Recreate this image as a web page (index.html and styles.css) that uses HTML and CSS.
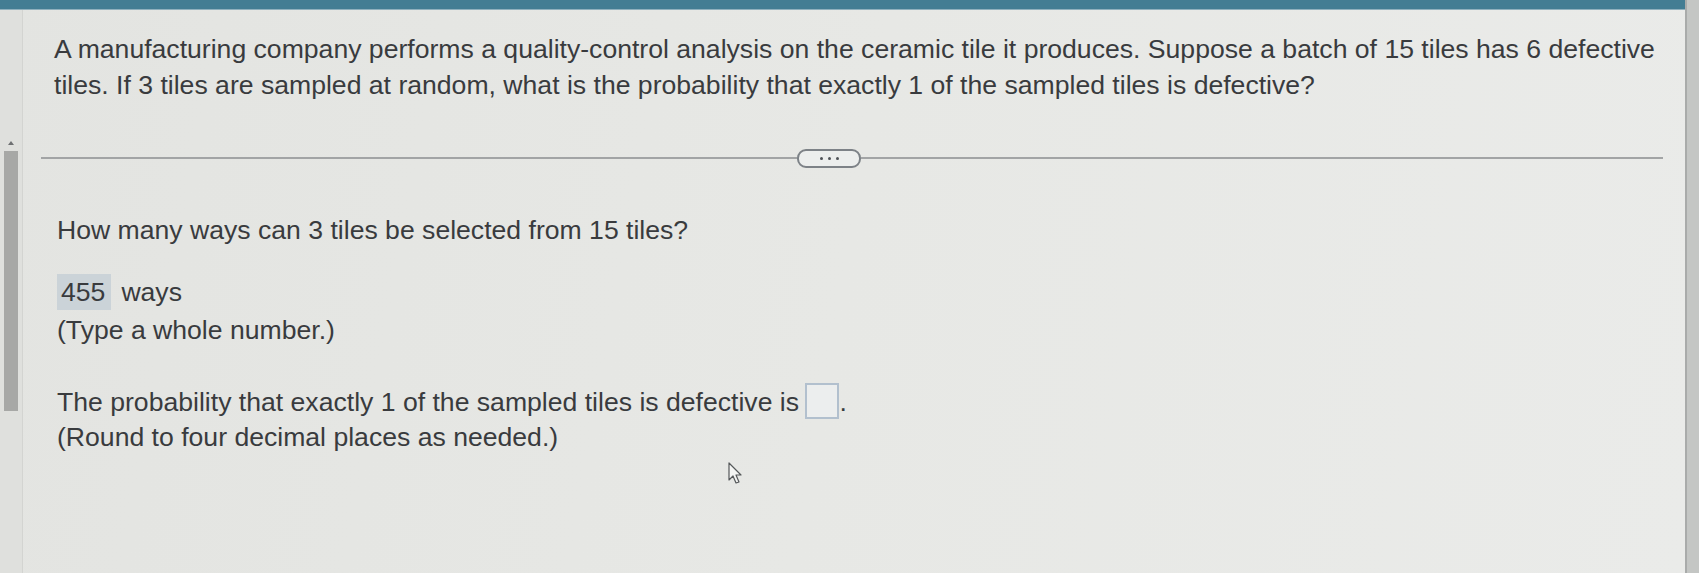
FILE: index.html
```html
<!DOCTYPE html>
<html lang="en">
<head>
<meta charset="utf-8">
<title>Question</title>
<link rel="stylesheet" href="styles.css">
</head>
<body>
<div class="app">
  <div class="page">
    <div class="topbar"></div>
    <div class="frame">
      <aside class="sidebar">
        <div class="scroll-arrow"></div>
        <div class="scroll-thumb"></div>
      </aside>
      <main class="main">
        <p class="question">A manufacturing company performs a quality-control analysis on the ceramic tile it produces. Suppose a batch of 15 tiles has 6 defective tiles. If 3 tiles are sampled at random, what is the probability that exactly 1 of the sampled tiles is defective?</p>
        <div class="divider">
          <div class="rule rule-left"></div>
          <div class="pill"><span></span><span></span><span></span></div>
          <div class="rule rule-right"></div>
        </div>
        <div class="work">
          <p class="line">How many ways can 3 tiles be selected from 15 tiles?</p>
          <div class="answer-row"><span class="filled">455</span><span>ways</span></div>
          <p class="line">(Type a whole number.)</p>
          <p class="line line-gap">The probability that exactly 1 of the sampled tiles is defective is <span class="blank"></span>.</p>
          <p class="line">(Round to four decimal places as needed.)</p>
        </div>
        <svg class="cursor" width="16" height="24" viewBox="0 0 16 24">
          <path d="M1 1 L1 18 L5 14 L8 21 L11 20 L8 13 L13 13 Z" fill="#f4f5f3" stroke="#55585a" stroke-width="1.2" stroke-linejoin="round"/>
        </svg>
      </main>
    </div>
  </div>
  <div class="edge"></div>
</div>
</body>
</html>
```

FILE: styles.css
```css
html, body {
  margin: 0;
  padding: 0;
  background: #e6e7e4;
}
.app {
  width: 1699px;
  height: 573px;
  display: flex;
  font-family: "Liberation Sans", Arial, sans-serif;
  color: #393b3e;
  overflow: hidden;
}
.page {
  flex: 1;
  display: flex;
  flex-direction: column;
  background: linear-gradient(100deg, #e3e4e1 0%, #e7e8e5 50%, #eaebe9 100%);
}
.topbar {
  height: 9px;
  background: #437d93;
  border-bottom: 1px solid #8fb0bd;
}
.frame {
  flex: 1;
  display: flex;
}
.sidebar {
  width: 23px;
  background: #dfe0dd;
  border-right: 1px solid #d3d4d1;
  display: flex;
  flex-direction: column;
  align-items: center;
  padding-top: 131px;
  box-sizing: border-box;
}
.scroll-arrow {
  width: 0;
  height: 0;
  border-left: 3px solid transparent;
  border-right: 3px solid transparent;
  border-bottom: 4px solid #6e7072;
}
.scroll-thumb {
  width: 14px;
  height: 260px;
  margin-top: 6px;
  background: #a7a8a6;
}
.main {
  flex: 1;
  position: relative;
  padding-top: 21px;
}
.question {
  margin: 0 0 0 31px;
  width: 1610px;
  font-size: 26.6px;
  line-height: 36px;
}
.divider {
  margin: 46px 0 0 18px;
  width: 1622px;
  height: 18px;
  display: flex;
  align-items: center;
}
.rule {
  height: 2px;
  background: #a2a4a5;
}
.rule-left {
  width: 756px;
}
.rule-right {
  flex: 1;
}
.pill {
  width: 60px;
  height: 15px;
  border: 2px solid #7d8287;
  border-radius: 9px;
  background: #eceeed;
  display: flex;
  justify-content: center;
  align-items: center;
  gap: 5px;
}
.pill span {
  width: 3px;
  height: 3px;
  background: #4f5357;
  border-radius: 50%;
}
.work {
  margin: 46px 0 0 34px;
  font-size: 26.6px;
}
.line {
  margin: 0;
  line-height: 35px;
}
.answer-row {
  margin-top: 26px;
  height: 36px;
  display: flex;
  align-items: center;
  gap: 10px;
  line-height: 36px;
}
.filled {
  background: #cbd3d8;
  padding: 0 6px 0 4px;
  height: 36px;
}
.line-gap {
  margin-top: 35px;
}
.answer-row + .line {
  margin-top: 3px;
}
.blank {
  display: inline-block;
  width: 30px;
  height: 32px;
  border: 2px solid #b2c0ce;
  background: #eceeee;
  vertical-align: -8px;
  margin-left: -1px;
}
.cursor {
  position: absolute;
  left: 705px;
  top: 452px;
}
.edge {
  width: 12px;
  background: #c4c6c4;
  border-left: 2px solid #a9abaa;
}
```
